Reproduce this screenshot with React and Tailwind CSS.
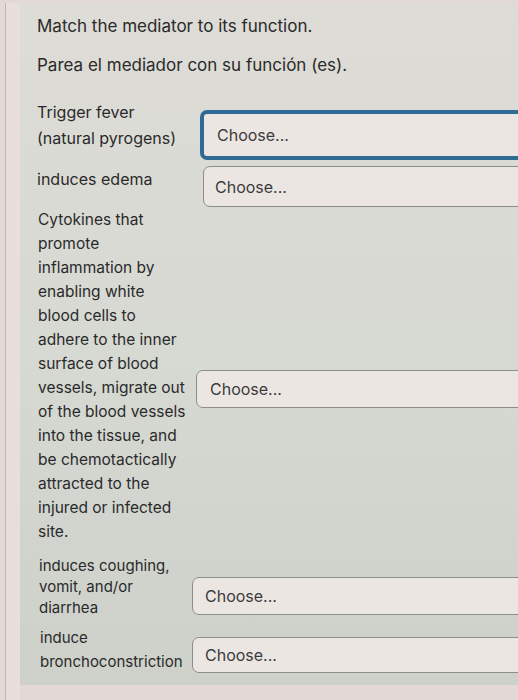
const rows = [
  {
    lines: ["Trigger fever", "(natural pyrogens)"],
    lead: "leading-[26px] text-[16px]",
    gap: "mt-[22px]",
    labelW: "w-[163px]",
    pad: "pl-[17px]",
    select: "h-[50px] border-[4px] border-[#2f6b93] translate-y-[10px]",
    textPad: "pl-[13px]",
  },
  {
    lines: ["induces edema"],
    lead: "leading-[26px] text-[16px]",
    gap: "mt-[7px]",
    labelW: "w-[166px]",
    pad: "pl-[17px]",
    select: "h-[41px] border border-[#8d8d8d] translate-y-[8px]",
    textPad: "pl-[11px]",
  },
  {
    lines: [
      "Cytokines that",
      "promote",
      "inflammation by",
      "enabling white",
      "blood cells to",
      "adhere to the inner",
      "surface of blood",
      "vessels, migrate out",
      "of the blood vessels",
      "into the tissue, and",
      "be chemotactically",
      "attracted to the",
      "injured or infected",
      "site.",
    ],
    lead: "leading-[24px] text-[15.5px]",
    gap: "mt-[9px]",
    labelW: "w-[158px]",
    pad: "pl-[18px]",
    select: "h-[38px] border border-[#8d8d8d] translate-y-[13px]",
    textPad: "pl-[13px]",
  },
  {
    lines: ["induces coughing,", "vomit, and/or", "diarrhea"],
    lead: "leading-[21px] text-[15px]",
    gap: "mt-[11px]",
    labelW: "w-[153px]",
    pad: "pl-[19px]",
    select: "h-[38px] border border-[#8d8d8d] translate-y-[9px]",
    textPad: "pl-[12px]",
  },
  {
    lines: ["induce", "bronchoconstriction"],
    lead: "leading-[24px] text-[15px]",
    gap: "mt-[8px]",
    labelW: "w-[152px]",
    pad: "pl-[20px]",
    select: "h-[36px] border border-[#8d8d8d] translate-y-[5px]",
    textPad: "pl-[12px]",
  },
];

function Choose({ cls, textPad }) {
  return (
    <div
      className={`flex w-[420px] shrink-0 items-center rounded-[7px] bg-[#ece6e3] text-[16px] text-[#3b3b3b] ${cls} ${textPad}`}
    >
      Choose...
    </div>
  );
}

export default function App() {
  return (
    <div
      className="h-[700px] w-[518px] overflow-hidden bg-[#e3d8d5] pt-[3px]"
      style={{ fontFamily: "Inter, 'Open Sans', sans-serif" }}
    >
      <div className="flex h-[700px]">
        <div className="w-[5px] shrink-0" />
        <div className="w-px shrink-0 bg-[#bdb3b0]" />
        <div className="w-[14px] shrink-0 bg-[#e8dfdc]" />
        <div className="h-[682px] flex-1 overflow-hidden bg-linear-to-b from-[#dedcd6] via-[#d7d9d3] to-[#cdd1ca] text-[#2a2a2a]">
          <div className="pl-[17px] pt-[11px] text-[17px] leading-[24px]">
            Match the mediator to its function.
          </div>
          <div className="pl-[17px] pt-[15px] text-[17px] leading-[24px]">
            Parea el mediador con su función (es).
          </div>

          <div className="flex flex-col">
            {rows.map((r, i) => (
              <div key={i} className={`flex items-center ${r.gap} ${r.pad}`}>
                <div className={`${r.labelW} shrink-0 ${r.lead}`}>
                  {r.lines.map((l, j) => (
                    <div key={j} className="whitespace-nowrap">
                      {l}
                    </div>
                  ))}
                </div>
                <Choose cls={r.select} textPad={r.textPad} />
              </div>
            ))}
          </div>
        </div>
      </div>
    </div>
  );
}
